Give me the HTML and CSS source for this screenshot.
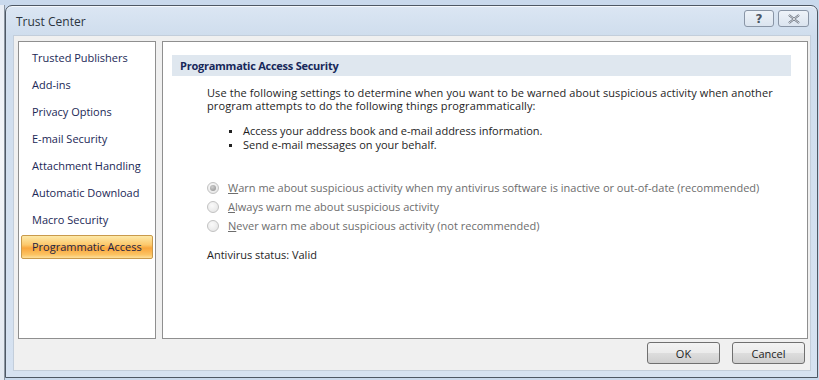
FILE: index.html
```html
<!DOCTYPE html>
<html>
<head>
<meta charset="utf-8">
<link rel="stylesheet" href="styles.css">
</head>
<body>
<div class="screen">
  <div class="backwin"></div>
  <div class="dialog">
    <div class="titlebar">
      <span class="title">Trust Center</span>
      <div class="tbtns">
        <span class="tbtn">?</span>
        <span class="tbtn close">
          <svg width="14" height="10" viewBox="0 0 14 10"><path d="M2 1 L12 9 M12 1 L2 9" stroke="#5b6472" stroke-width="2.2" fill="none"/><path d="M2 1 L12 9 M12 1 L2 9" stroke="#ffffff" stroke-width="0.8" fill="none"/></svg>
        </span>
      </div>
    </div>
    <div class="client">
      <div class="main">
        <ul class="nav">
          <li class="item">Trusted Publishers</li>
          <li class="item">Add-ins</li>
          <li class="item">Privacy Options</li>
          <li class="item">E-mail Security</li>
          <li class="item">Attachment Handling</li>
          <li class="item">Automatic Download</li>
          <li class="item">Macro Security</li>
          <li class="item selected"><span>Programmatic Access</span></li>
        </ul>
        <div class="panel">
          <div class="header">Programmatic Access Security</div>
          <div class="content">
            <p class="intro">Use the following settings to determine when you want to be warned about suspicious activity when another program attempts to do the following things programmatically:</p>
            <ul class="bullets">
              <li>Access your address book and e-mail address information.</li>
              <li>Send e-mail messages on your behalf.</li>
            </ul>
            <div class="radios">
              <div class="radio checked"><span class="dot"></span><span><u>W</u>arn me about suspicious activity when my antivirus software is inactive or out-of-date (recommended)</span></div>
              <div class="radio"><span class="dot"></span><span><u>A</u>lways warn me about suspicious activity</span></div>
              <div class="radio"><span class="dot"></span><span><u>N</u>ever warn me about suspicious activity (not recommended)</span></div>
            </div>
            <p class="status">Antivirus status: Valid</p>
          </div>
        </div>
      </div>
      <div class="buttons">
        <button class="btn">OK</button>
        <button class="btn">Cancel</button>
      </div>
    </div>
  </div>
</div>
</body>
</html>
```
FILE: styles.css
```css
* { box-sizing: border-box; }
html, body { margin: 0; padding: 0; }
body {
  width: 819px; height: 380px; overflow: hidden;
  font-family: "Open Sans", "Noto Sans", "DejaVu Sans", sans-serif;
  font-size: 11px;
  background: #c9d9ec;
}
.screen {
  display: flex;
  width: 819px; height: 380px;
  padding-top: 5px;
}
.backwin {
  width: 5px; height: 375px;
  background: linear-gradient(#e9eef5, #f4f6f9 40%, #e3e9f1);
  border-right: 1px solid #8c96a2;
}
.dialog {
  width: 813px; height: 373px;
  border: 1px solid #4e5864;
  border-radius: 7px 7px 0 0;
  background: linear-gradient(#dbe6f3, #cfdded 30px, #d6e2f1);
  display: flex; flex-direction: column;
  padding: 0 6px 6px 7px;
  box-shadow: inset 0 1px 0 #f4f8fc;
}
.titlebar {
  height: 30px;
  display: flex; align-items: center; justify-content: space-between;
  padding-left: 3px; padding-top: 2px;
}
.title { color: #2b3440; font-size: 12px; }
.tbtns { display: flex; gap: 4px; margin-top: -6px; margin-right: 2px; }
.tbtn {
  width: 30px; height: 17px;
  border: 1px solid #8995a6; border-radius: 3px;
  background: linear-gradient(#eef3f9, #dbe4ef);
  display: flex; align-items: center; justify-content: center;
  color: #4a5564; font-weight: bold; font-size: 12px; font-family: "DejaVu Sans", sans-serif;
}
.close { width: 31px; }
.client {
  flex: 1;
  background: #f0f0f0;
  border: 1px solid #c3cedb;
  display: flex; flex-direction: column;
  padding: 5px 2px 6px 4px;
}
.main { display: flex; gap: 6px; height: 298px; }
.nav {
  flex: none;
  list-style: none; margin: 0; padding: 2px 1px 0;
  width: 138px; height: 298px;
  background: #fff;
  border: 1px solid #8f8f8f;
}
.item {
  height: 27px; display: flex; align-items: center;
  padding-left: 12px;
  color: #1b2856;
  white-space: nowrap;
}
.item.selected { padding: 2px 1px; }
.item.selected span {
  flex: 1; height: 24px; display: flex; align-items: center;
  padding-left: 10px;
  border: 1px solid #c99a4c; border-radius: 2px;
  background: linear-gradient(#fde9a8 0%, #fcc86c 40%, #f9a63c 55%, #fcc363 85%, #fde09a 100%);
  color: #1b2344;
}
.panel {
  flex: 1; min-width: 0;
  background: #fff;
  border: 1px solid #8f8f8f;
  padding: 13px 16px 0 9px;
}
.header {
  height: 21px;
  background: #dfe7ef;
  color: #17285a;
  font-weight: bold;
  letter-spacing: -0.25px;
  display: flex; align-items: center;
  padding-left: 8px;
}
.content { padding-left: 35px; color: #1e1e1e; }
.intro { margin: 10px 0 0; line-height: 13px; width: 590px; letter-spacing: 0.1px; }
.bullets { margin: 12px 0 0; padding-left: 36px; line-height: 14px; list-style: none; }
.bullets li { position: relative; }
.bullets li::before {
  content: ""; position: absolute; left: -14px; top: 6px;
  width: 3px; height: 3px; background: #222;
}
.radios { margin-top: 26px; padding-left: 0; }
.radio {
  height: 19px; display: flex; align-items: center; gap: 4px;
  color: #6d6d6d;
}
.dot {
  flex: none;
  width: 12px; height: 12px; border-radius: 50%;
  border: 1px solid #c2c2c2;
  background: radial-gradient(circle at 40% 35%, #fafafa, #e2e2e2);
  display: flex; align-items: center; justify-content: center;
  margin-right: 5px;
}
.radio.checked .dot::after {
  content: ""; width: 6px; height: 6px; border-radius: 50%;
  background: radial-gradient(circle at 40% 35%, #cfcfcf, #8d8d8d);
}
.status { margin: 12px 0 0; }
.buttons {
  display: flex; justify-content: flex-end; gap: 12px;
  margin-top: 3px; padding-right: 3px;
}
.btn {
  width: 73px; height: 22px;
  border: 1px solid #707070; border-radius: 3px;
  background: linear-gradient(#f3f3f3 0%, #ebebeb 50%, #dddddd 51%, #cfcfcf 100%);
  font-family: inherit; font-size: 11px; color: #1e1e1e;
  padding: 0;
}
```
